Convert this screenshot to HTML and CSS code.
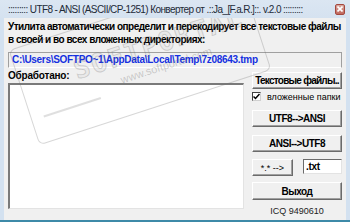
FILE: index.html
```html
<!DOCTYPE html>
<html lang="ru">
<head>
<meta charset="utf-8">
<title>UTF8 - ANSI</title>
<link rel="stylesheet" href="styles.css">
</head>
<body>
<div class="window">
  <div class="titlebar">
    <span class="title">::::::::: UTF8 - ANSI (ASCII/CP-1251) Конвертер от .::Ja_[F.a.R.]::. v.2.0 :::::::::</span>
    <span class="close"><svg width="6" height="6" viewBox="0 0 6 6"><path d="M0.5 0.5 L5.5 5.5 M5.5 0.5 L0.5 5.5" stroke="#ffffff" stroke-width="1.6"/></svg></span>
  </div>
  <div class="client">
    <p class="desc">Утилита автоматически определит и перекодирует все текстовые файлы<br>в своей и во всех вложенных директориях:</p>
    <div class="path">C:\Users\SOFTPO~1\AppData\Local\Temp\7z08643.tmp</div>
    <div class="main">
      <div class="left">
        <div class="label">Обработано:</div>
        <div class="memo"></div>
      </div>
      <div class="right">
        <div class="btn btn-files">Текстовые файлы..</div>
        <label class="check">
          <span class="box"><svg width="7" height="7" viewBox="0 0 7 7"><path d="M0.5 3.5 L2.5 5.5 L6.5 1" fill="none" stroke="#000" stroke-width="1.5"/></svg></span>
          <span class="check-text">вложенные папки</span>
        </label>
        <div class="btn btn-utf">UTF8--&gt;ANSI</div>
        <div class="btn btn-ansi">ANSI--&gt;UTF8</div>
        <div class="ext-row">
          <div class="btn btn-mask">*.* --&gt;</div>
          <div class="ext">.txt</div>
        </div>
        <div class="btn btn-exit">Выход</div>
        <div class="icq">ICQ 9490610</div>
      </div>
    </div>
    <div class="stamp">
      <div class="stamp-big">SOFTPORTAL</div>
      <div class="stamp-small">www.softportal.com</div>
      <div class="stamp-line"></div>
    </div>
  </div>
</div>
</body>
</html>
```

FILE: styles.css
```css
html, body {
  margin: 0;
  padding: 0;
  background: #ffffff;
}

.window {
  width: 350px;
  height: 222px;
  box-sizing: border-box;
  background: #d3e1f0;
  border-bottom: 2px solid #3d8aa8;
  display: flex;
  flex-direction: column;
  overflow: hidden;
  font-family: "Liberation Sans", Arial, sans-serif;
}

.titlebar {
  height: 18px;
  display: flex;
  align-items: center;
  padding-left: 8px;
  padding-right: 5px;
  background: linear-gradient(#dbe6f2, #d5e2f0);
}

.title {
  flex: 1;
  font-size: 10px;
  letter-spacing: -0.6px;
  color: #1e2a38;
  white-space: nowrap;
  overflow: hidden;
}

.close {
  width: 8px;
  height: 9px;
  border: 1px solid #a4483e;
  border-radius: 2px;
  background: linear-gradient(#d9a8a0, #c0675c);
  display: flex;
  align-items: center;
  justify-content: center;
}

.client {
  position: relative;
  margin: 0 4px;
  flex: 1;
  background: #f0f0f0;
  padding: 2px 4px 0 4px;
  overflow: hidden;
}

.desc {
  margin: 0;
  font-size: 10px;
  font-weight: bold;
  letter-spacing: -0.5px;
  line-height: 13px;
  color: #000;
  white-space: nowrap;
}

.path {
  margin-top: 6px;
  height: 16px;
  box-sizing: border-box;
  border-top: 1px solid #a0a0a0;
  border-left: 1px solid #a0a0a0;
  border-right: 1px solid #a0a0a0;
  border-bottom: 1px solid #ffffff;
  padding-left: 3px;
  font-size: 10px;
  font-weight: bold;
  letter-spacing: -0.3px;
  line-height: 14px;
  color: #1530e0;
  white-space: nowrap;
}

.main {
  display: flex;
  gap: 8px;
  margin-top: 1px;
}

.left {
  width: 236px;
  display: flex;
  flex-direction: column;
}

.label {
  font-size: 10px;
  font-weight: bold;
  letter-spacing: -0.2px;
  line-height: 13px;
  height: 14px;
}

.memo {
  height: 126px;
  box-sizing: border-box;
  background: #ffffff;
  border-top: 2px solid #7a7a7a;
  border-left: 2px solid #7a7a7a;
  border-right: 1px solid #e3e3e3;
  border-bottom: 1px solid #e3e3e3;
}

.right {
  width: 90px;
  display: flex;
  flex-direction: column;
}

.btn {
  box-sizing: border-box;
  background: #f0f0f0;
  border-top: 1px solid #ffffff;
  border-left: 1px solid #ffffff;
  border-right: 1px solid #6b6b6b;
  border-bottom: 1px solid #6b6b6b;
  box-shadow: inset -1px -1px 0 #a0a0a0;
  font-size: 10px;
  font-weight: bold;
  letter-spacing: -0.5px;
  color: #000;
  display: flex;
  align-items: center;
  justify-content: center;
  white-space: nowrap;
}

.btn-files {
  margin-top: 3px;
  height: 17px;
  letter-spacing: -0.75px;
}

.check {
  display: flex;
  align-items: center;
  gap: 6px;
  margin-top: 2px;
  height: 11px;
}

.box {
  width: 9px;
  height: 9px;
  box-sizing: border-box;
  background: #ffffff;
  border-top: 1px solid #404040;
  border-left: 1px solid #404040;
  border-right: 1px solid #d0d0d0;
  border-bottom: 1px solid #d0d0d0;
  display: flex;
  align-items: center;
  justify-content: center;
}

.check-text {
  font-size: 9px;
  color: #000;
  white-space: nowrap;
}

.btn-utf {
  margin-top: 8px;
  height: 17px;
}

.btn-ansi {
  margin-top: 8px;
  height: 17px;
}

.ext-row {
  display: flex;
  justify-content: space-between;
  align-items: flex-start;
  margin-top: 7px;
  height: 17px;
}

.btn-mask {
  width: 41px;
  height: 17px;
  font-weight: normal;
  letter-spacing: 0;
  font-size: 9px;
}

.ext {
  width: 39px;
  height: 15px;
  box-sizing: border-box;
  background: #ffffff;
  border-top: 1px solid #6b6b6b;
  border-left: 1px solid #6b6b6b;
  border-right: 1px solid #e3e3e3;
  border-bottom: 1px solid #e3e3e3;
  font-size: 10px;
  font-weight: bold;
  letter-spacing: -0.3px;
  line-height: 13px;
  padding-left: 2px;
}

.btn-exit {
  margin-top: 6px;
  height: 18px;
}

.icq {
  margin-top: 5px;
  font-size: 9px;
  line-height: 12px;
  text-align: center;
  color: #222;
}

.stamp {
  position: absolute;
  left: 14px;
  top: -8px;
  width: 244px;
  height: 100px;
  border: 1.5px solid rgba(110, 110, 110, 0.28);
  border-radius: 6px;
  transform: rotate(-18deg);
  transform-origin: center;
  pointer-events: none;
  display: flex;
  flex-direction: column;
  align-items: flex-end;
  justify-content: center;
  padding-right: 10px;
  box-sizing: border-box;
}

.stamp-big {
  font-family: "DejaVu Sans Mono", monospace;
  font-size: 26px;
  font-weight: bold;
  letter-spacing: 2px;
  color: rgba(140, 140, 140, 0.08);
  -webkit-text-stroke: 1px rgba(110, 110, 110, 0.28);
}

.stamp-small {
  font-size: 11px;
  color: rgba(110, 110, 110, 0.32);
  margin-top: 2px;
  margin-right: 40px;
}

.stamp-line {
  align-self: flex-start;
  margin-left: 12px;
  margin-top: 4px;
  width: 60px;
  height: 2px;
  background: rgba(110, 110, 110, 0.22);
}
```
